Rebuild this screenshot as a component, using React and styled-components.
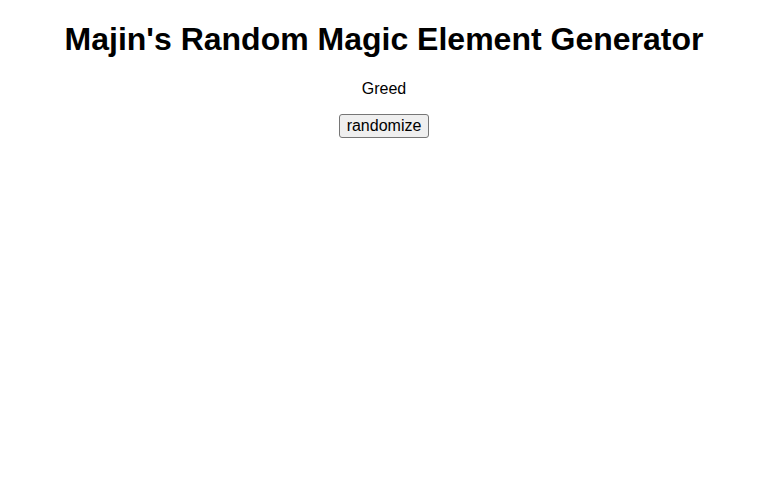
import React, { useState } from "react";
import styled, { createGlobalStyle } from "styled-components";

const Global = createGlobalStyle`
  body { margin: 0 8px 8px; background: #fff; font-family: "Liberation Sans", Arial, sans-serif; color: #000; }
`;

const Page = styled.div`
  text-align: center;
`;

const Title = styled.h1`
  font-size: 32px;
  font-weight: bold;
  margin: 21.44px 0;
`;

const Element = styled.p`
  font-size: 16px;
  margin: 16px 0;
`;

const Button = styled.button`
  font-family: "Liberation Sans", Arial, sans-serif;
  font-size: 16px;
  line-height: 18px;
  padding: 2px 7px;
  background: #efefef;
  border: 1px solid #767676;
  border-radius: 3px;
  color: #000;
  cursor: pointer;
`;

const elements = ["Greed", "Fire", "Water", "Wind", "Earth", "Lightning", "Ice", "Shadow"];

export default function App() {
  const [el, setEl] = useState("Greed");
  return (
    <Page>
      <Global />
      <Title>Majin's Random Magic Element Generator</Title>
      <Element>{el}</Element>
      <Button onClick={() => setEl(elements[Math.floor(Math.random() * elements.length)])}>
        randomize
      </Button>
    </Page>
  );
}
